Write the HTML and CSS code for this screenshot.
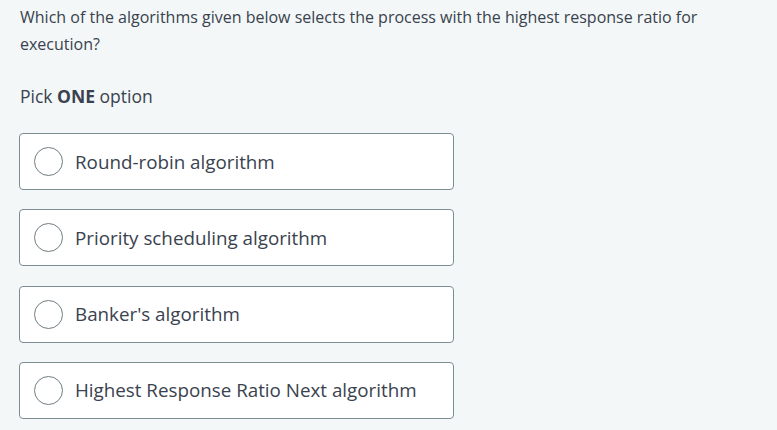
FILE: index.html
```html
<!DOCTYPE html>
<html>
<head>
<meta charset="utf-8">
<link rel="stylesheet" href="styles.css">
</head>
<body>
<div class="page">
  <p class="question">Which of the algorithms given below selects the process with the highest response ratio for execution?</p>
  <p class="pick">Pick <strong>ONE</strong> option</p>
  <div class="options">
    <label class="option"><span class="radio"></span><span class="label">Round-robin algorithm</span></label>
    <label class="option"><span class="radio"></span><span class="label">Priority scheduling algorithm</span></label>
    <label class="option"><span class="radio"></span><span class="label">Banker's algorithm</span></label>
    <label class="option"><span class="radio"></span><span class="label">Highest Response Ratio Next algorithm</span></label>
  </div>
</div>
</body>
</html>
```
FILE: styles.css
```css
html, body {
  margin: 0;
  padding: 0;
  background: #f3f7f7;
}
body {
  font-family: "Open Sans", "Liberation Sans", sans-serif;
  color: #39424e;
}
.page {
  padding: 4px 20px 0 20px;
  width: 720px;
}
.question {
  margin: 0;
  font-size: 16px;
  line-height: 27px;
  width: 720px;
}
.pick {
  margin: 25px 0 0 0;
  font-size: 17.5px;
  line-height: 26px;
}
.pick strong {
  font-weight: 700;
}
.options {
  margin-top: 24px;
  display: flex;
  flex-direction: column;
  gap: 19.3px;
  margin-left: -1px;
}
.option {
  box-sizing: border-box;
  width: 435px;
  height: 57px;
  background: #ffffff;
  border: 1px solid #7c8e94;
  border-radius: 4px;
  display: flex;
  align-items: center;
  padding-left: 14px;
}
.radio {
  box-sizing: border-box;
  width: 29px;
  height: 29px;
  border: 1px solid #6f7c82;
  border-radius: 50%;
  background: #fff;
  flex: none;
}
.label {
  margin-left: 12px;
  font-size: 18.8px;
  color: #39424e;
}
```
